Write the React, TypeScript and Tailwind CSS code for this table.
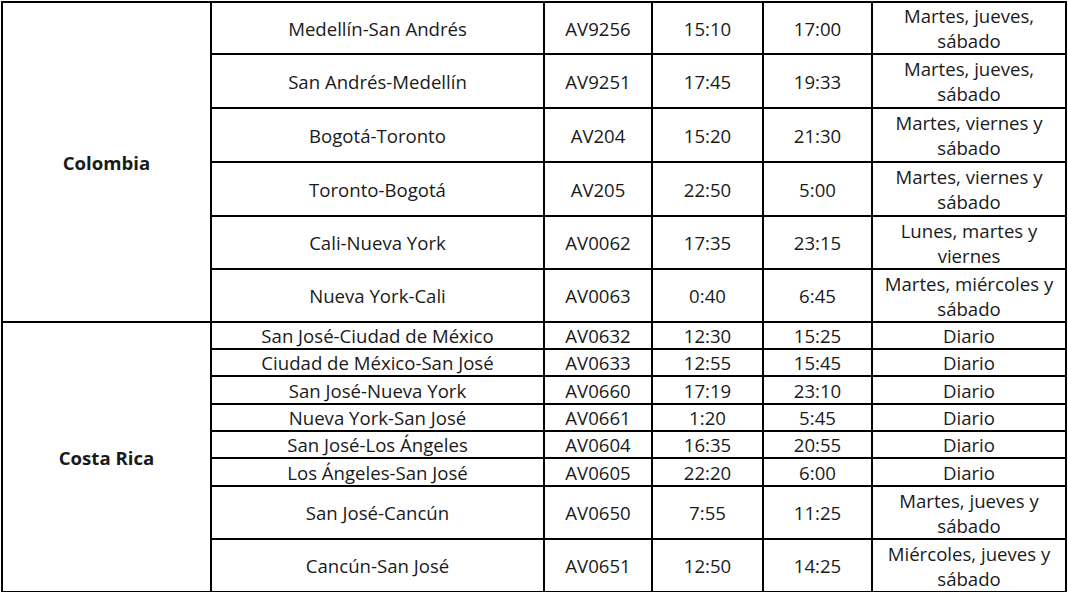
import React from "react";

type Row = { ruta: string; vuelo: string; sal: string; lle: string; freq: string; h: string };

const colombia: Row[] = [
  { ruta: "Medellín-San Andrés", vuelo: "AV9256", sal: "15:10", lle: "17:00", freq: "Martes, jueves, sábado", h: "h-[52px]" },
  { ruta: "San Andrés-Medellín", vuelo: "AV9251", sal: "17:45", lle: "19:33", freq: "Martes, jueves, sábado", h: "h-[54px]" },
  { ruta: "Bogotá-Toronto", vuelo: "AV204", sal: "15:20", lle: "21:30", freq: "Martes, viernes y sábado", h: "h-[54px]" },
  { ruta: "Toronto-Bogotá", vuelo: "AV205", sal: "22:50", lle: "5:00", freq: "Martes, viernes y sábado", h: "h-[54px]" },
  { ruta: "Cali-Nueva York", vuelo: "AV0062", sal: "17:35", lle: "23:15", freq: "Lunes, martes y viernes", h: "h-[53px]" },
  { ruta: "Nueva York-Cali", vuelo: "AV0063", sal: "0:40", lle: "6:45", freq: "Martes, miércoles y sábado", h: "h-[53px]" },
];

const costa: Row[] = [
  { ruta: "San José-Ciudad de México", vuelo: "AV0632", sal: "12:30", lle: "15:25", freq: "Diario", h: "h-[27px]" },
  { ruta: "Ciudad de México-San José", vuelo: "AV0633", sal: "12:55", lle: "15:45", freq: "Diario", h: "h-[27px]" },
  { ruta: "San José-Nueva York", vuelo: "AV0660", sal: "17:19", lle: "23:10", freq: "Diario", h: "h-[28px]" },
  { ruta: "Nueva York-San José", vuelo: "AV0661", sal: "1:20", lle: "5:45", freq: "Diario", h: "h-[26px]" },
  { ruta: "San José-Los Ángeles", vuelo: "AV0604", sal: "16:35", lle: "20:55", freq: "Diario", h: "h-[27px]" },
  { ruta: "Los Ángeles-San José", vuelo: "AV0605", sal: "22:20", lle: "6:00", freq: "Diario", h: "h-[28px]" },
  { ruta: "San José-Cancún", vuelo: "AV0650", sal: "7:55", lle: "11:25", freq: "Martes, jueves y sábado", h: "h-[53px]" },
  { ruta: "Cancún-San José", vuelo: "AV0651", sal: "12:50", lle: "14:25", freq: "Miércoles, jueves y sábado", h: "h-[53px]" },
];

const td = "border-2 border-black text-center align-middle p-0 px-1 leading-[25px]";

function Group({ name, rows }: { name: string; rows: Row[] }) {
  return (
    <>
      {rows.map((r, i) => (
        <tr key={r.vuelo} className={r.h}>
          {i === 0 && (
            <td rowSpan={rows.length} className={td + " font-bold"}>
              {name}
            </td>
          )}
          <td className={td}>{r.ruta}</td>
          <td className={td}>{r.vuelo}</td>
          <td className={td}>{r.sal}</td>
          <td className={td}>{r.lle}</td>
          <td className={td}>{r.freq}</td>
        </tr>
      ))}
    </>
  );
}

export default function App() {
  return (
    <div className="w-[1068px] h-[592px] overflow-hidden bg-white">
      <div className="pt-px pl-px">
        <table className="w-[1064px] border-collapse table-fixed text-[18.6px] text-[#1a1a1a] font-['Open_Sans','Noto_Sans',sans-serif]">
          <colgroup>
            <col className="w-[209px]" />
            <col className="w-[333px]" />
            <col className="w-[108px]" />
            <col className="w-[111px]" />
            <col className="w-[109px]" />
            <col className="w-[194px]" />
          </colgroup>
          <tbody>
            <Group name="Colombia" rows={colombia} />
            <Group name="Costa Rica" rows={costa} />
          </tbody>
        </table>
      </div>
    </div>
  );
}
